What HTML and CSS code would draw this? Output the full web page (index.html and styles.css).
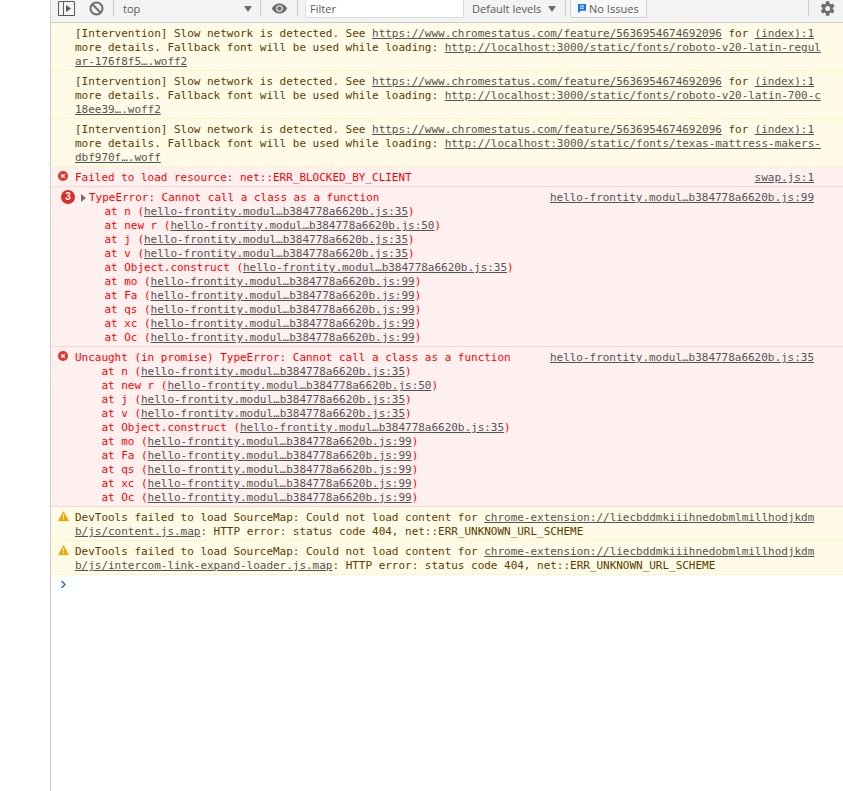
FILE: index.html
```html
<!DOCTYPE html>
<html lang="en">
<head>
<meta charset="utf-8">
<title>Console</title>
<link rel="stylesheet" href="styles.css">
</head>
<body>
<div class="panel">
  <div class="toolbar">
    <svg class="ic-sidebar" width="17" height="15" viewBox="0 0 17 15"><path d="M0.5 0.5h16v14h-16z M5.500 0.5v14" fill="none" stroke="#5a5a5a"/><path d="M8 4l5 3.500-5 3.500z" fill="#5a5a5a"/></svg>
    <svg class="ic-block" width="15" height="15" viewBox="0 0 15 15"><circle cx="7.500" cy="7.500" r="6" fill="none" stroke="#6e6e6e" stroke-width="2"/><path d="M3.300 3.300l8.400 8.400" stroke="#6e6e6e" stroke-width="2"/></svg>
    <span class="sep sep-a"></span>
    <div class="context"><span>top</span><i class="tri"></i></div>
    <span class="sep sep-b"></span>
    <svg class="ic-eye" width="17" height="11" viewBox="0 0 16 11"><path d="M8 0.500C4.500 0.500 1.600 2.600 0.300 5.500 1.600 8.400 4.500 10.500 8 10.500s6.400-2.100 7.700-5C14.400 2.600 11.500 0.500 8 0.500z" fill="#6e6e6e"/><circle cx="8" cy="5.500" r="3.300" fill="#f3f3f3"/><circle cx="8" cy="5.500" r="2.200" fill="#6e6e6e"/></svg>
    <span class="sep sep-c"></span>
    <div class="filter">Filter</div>
    <div class="levels"><span>Default levels</span><i class="tri"></i></div>
    <span class="sep sep-d"></span>
    <div class="issues"><svg width="8" height="9" viewBox="0 0 8 9"><path d="M0 0h8v6.800H3L0 9z" fill="#1a73e8"/><path d="M2 2h4M2 4.200h4" stroke="#fff"/></svg><span>No Issues</span></div>
    <span class="sep sep-e"></span>
    <svg class="ic-gear" width="15" height="15" viewBox="1.500 1.500 21 21"><path fill="#6e6e6e" d="M19.400 13a7.500 7.500 0 0 0 0-2l2.400-1.900-2.300-4-2.900 1.200a7.500 7.500 0 0 0-1.700-1L14.500 2h-4.600l-.4 3.300a7.500 7.500 0 0 0-1.700 1L4.900 5.100l-2.300 4L5 11a7.500 7.500 0 0 0 0 2l-2.400 1.900 2.300 4 2.900-1.200a7.500 7.500 0 0 0 1.700 1l.4 3.300h4.600l.4-3.300a7.500 7.500 0 0 0 1.700-1l2.900 1.200 2.300-4zM12.200 15.500a3.500 3.500 0 1 1 0-7 3.500 3.500 0 0 1 0 7z"/></svg>
  </div>

  <div class="msg info">
    <div class="line split"><span>[Intervention] Slow network is detected. See <a>https://www.chromestatus.com/feature/5636954674692096</a> for</span><a>(index):1</a></div>
    <div class="line">more details. Fallback font will be used while loading: <a>http://localhost:3000/static/fonts/roboto-v20-latin-regul</a></div>
    <div class="line"><a>ar-176f8f5….woff2</a></div>
  </div>
  <div class="msg info">
    <div class="line split"><span>[Intervention] Slow network is detected. See <a>https://www.chromestatus.com/feature/5636954674692096</a> for</span><a>(index):1</a></div>
    <div class="line">more details. Fallback font will be used while loading: <a>http://localhost:3000/static/fonts/roboto-v20-latin-700-c</a></div>
    <div class="line"><a>18ee39….woff2</a></div>
  </div>
  <div class="msg info">
    <div class="line split"><span>[Intervention] Slow network is detected. See <a>https://www.chromestatus.com/feature/5636954674692096</a> for</span><a>(index):1</a></div>
    <div class="line">more details. Fallback font will be used while loading: <a>http://localhost:3000/static/fonts/texas-mattress-makers-</a></div>
    <div class="line"><a>dbf970f….woff</a></div>
  </div>

  <div class="msg error">
    <svg class="ic-err" width="10" height="10" viewBox="0 0 11 11"><circle cx="5.500" cy="5.500" r="5.500" fill="#e2352d"/><path d="M3.500 3.500l4 4M7.500 3.500l-4 4" stroke="#fff" stroke-width="1.400"/></svg>
    <div class="line split"><span>Failed to load resource: net::ERR_BLOCKED_BY_CLIENT</span><a>swap.js:1</a></div>
  </div>

  <div class="msg error group">
    <span class="count">3</span>
    <i class="disclosure"></i>
    <div class="line split"><span>TypeError: Cannot call a class as a function</span><a>hello-frontity.modul…b384778a6620b.js:99</a></div>
    <div class="frame">    at n (<a>hello-frontity.modul…b384778a6620b.js:35</a>)</div>
    <div class="frame">    at new r (<a>hello-frontity.modul…b384778a6620b.js:50</a>)</div>
    <div class="frame">    at j (<a>hello-frontity.modul…b384778a6620b.js:35</a>)</div>
    <div class="frame">    at v (<a>hello-frontity.modul…b384778a6620b.js:35</a>)</div>
    <div class="frame">    at Object.construct (<a>hello-frontity.modul…b384778a6620b.js:35</a>)</div>
    <div class="frame">    at mo (<a>hello-frontity.modul…b384778a6620b.js:99</a>)</div>
    <div class="frame">    at Fa (<a>hello-frontity.modul…b384778a6620b.js:99</a>)</div>
    <div class="frame">    at qs (<a>hello-frontity.modul…b384778a6620b.js:99</a>)</div>
    <div class="frame">    at xc (<a>hello-frontity.modul…b384778a6620b.js:99</a>)</div>
    <div class="frame">    at Oc (<a>hello-frontity.modul…b384778a6620b.js:99</a>)</div>
  </div>

  <div class="msg error">
    <svg class="ic-err" width="10" height="10" viewBox="0 0 11 11"><circle cx="5.500" cy="5.500" r="5.500" fill="#e2352d"/><path d="M3.500 3.500l4 4M7.500 3.500l-4 4" stroke="#fff" stroke-width="1.400"/></svg>
    <div class="line split"><span>Uncaught (in promise) TypeError: Cannot call a class as a function</span><a>hello-frontity.modul…b384778a6620b.js:35</a></div>
    <div class="line">    at n (<a>hello-frontity.modul…b384778a6620b.js:35</a>)</div>
    <div class="line">    at new r (<a>hello-frontity.modul…b384778a6620b.js:50</a>)</div>
    <div class="line">    at j (<a>hello-frontity.modul…b384778a6620b.js:35</a>)</div>
    <div class="line">    at v (<a>hello-frontity.modul…b384778a6620b.js:35</a>)</div>
    <div class="line">    at Object.construct (<a>hello-frontity.modul…b384778a6620b.js:35</a>)</div>
    <div class="line">    at mo (<a>hello-frontity.modul…b384778a6620b.js:99</a>)</div>
    <div class="line">    at Fa (<a>hello-frontity.modul…b384778a6620b.js:99</a>)</div>
    <div class="line">    at qs (<a>hello-frontity.modul…b384778a6620b.js:99</a>)</div>
    <div class="line">    at xc (<a>hello-frontity.modul…b384778a6620b.js:99</a>)</div>
    <div class="line">    at Oc (<a>hello-frontity.modul…b384778a6620b.js:99</a>)</div>
  </div>

  <div class="msg warn">
    <svg class="ic-warn" width="11" height="10" viewBox="0 0 11 10"><path d="M5.500 0L11 10H0z" fill="#f2a600"/><path d="M5.500 3.200v3.300M5.500 7.500v1.200" stroke="#fff" stroke-width="1.100"/></svg>
    <div class="line">DevTools failed to load SourceMap: Could not load content for <a>chrome-extension://liecbddmkiiihnedobmlmillhodjkdm</a></div>
    <div class="line"><a>b/js/content.js.map</a>: HTTP error: status code 404, net::ERR_UNKNOWN_URL_SCHEME</div>
  </div>
  <div class="msg warn">
    <svg class="ic-warn" width="11" height="10" viewBox="0 0 11 10"><path d="M5.500 0L11 10H0z" fill="#f2a600"/><path d="M5.500 3.200v3.300M5.500 7.500v1.200" stroke="#fff" stroke-width="1.100"/></svg>
    <div class="line">DevTools failed to load SourceMap: Could not load content for <a>chrome-extension://liecbddmkiiihnedobmlmillhodjkdm</a></div>
    <div class="line"><a>b/js/intercom-link-expand-loader.js.map</a>: HTTP error: status code 404, net::ERR_UNKNOWN_URL_SCHEME</div>
  </div>

  <div class="prompt"><svg width="7" height="9" viewBox="0 0 7 9"><path d="M1.500 1l3.500 3.500L1.500 8" fill="none" stroke="#2a73e8" stroke-width="1.600"/></svg></div>
</div>
</body>
</html>
```
FILE: styles.css
```css
html, body {
  margin: 0;
  height: 100%;
  background: #fff;
}
.panel {
  margin-left: 50px;
  height: 791px;
  box-sizing: border-box;
  border-left: 1px solid #ccc;
  font-family: "DejaVu Sans Mono", monospace;
  font-size: 11px;
  letter-spacing: -0.022px;
  line-height: 14px;
  overflow: hidden;
}
.toolbar {
  height: 23px;
  box-sizing: border-box;
  border-bottom: 1px solid #ccc;
  background: #f3f3f3;
  display: flex;
  align-items: flex-start;
  font-family: "Open Sans", sans-serif;
  font-size: 11px;
  letter-spacing: 0.02px;
  line-height: 17px;
  color: #5a5a5a;
}
.ic-sidebar { margin: 1px 0 0 7px; flex: none; }
.ic-block { margin: 1px 0 0 14px; flex: none; }
.sep { width: 1px; height: 16px; background: #ccc; flex: none; }
.sep-a { margin-left: 9px; }
.context { margin-left: 9px; width: 129px; display: flex; justify-content: space-between; align-items: center; flex: none; height: 17px; }
.tri { width: 0; height: 0; border-left: 4px solid transparent; border-right: 4px solid transparent; border-top: 6px solid #6e6e6e; display: block; }
.sep-b { margin-left: 8px; }
.ic-eye { margin: 3px 0 0 10px; flex: none; }
.sep-c { margin-left: 9px; }
.filter {
  margin-left: 7px;
  width: 159px;
  height: 18px;
  box-sizing: border-box;
  background: #fff;
  border: 1px solid #ddd;
  border-top: 0;
  padding-left: 4px;
  flex: none;
}
.levels { margin-left: 8px; width: 84px; display: flex; justify-content: space-between; align-items: center; flex: none; height: 17px; }
.sep-d { margin-left: 9px; }
.issues {
  margin-left: 4px;
  width: 77px;
  height: 18px;
  box-sizing: border-box;
  border: 1px solid #d0d0d0;
  border-top: 0;
  border-radius: 0 0 2px 2px;
  background: #f8f8f8;
  display: flex;
  align-items: center;
  gap: 3px;
  padding-left: 7px;
  flex: none;
}
.sep-e { margin-left: 161px; }
.ic-gear { margin: 1px 0 0 11px; flex: none; }

.msg {
  position: relative;
  padding: 4px 29px 1px 24px;
  border-bottom: 1px solid #fff;
}
.line, .frame { white-space: pre; }
.split { display: flex; justify-content: space-between; }
a { text-decoration: underline; color: #545454; }

.info { background: #fffbe6; color: #5c3b00; border-bottom-color: #fff5c2; }
.error { background: #fff0f0; color: #f00; border-bottom-color: #ffd6d6; }
.warn { background: #fffbe6; color: #5c3b00; border-bottom-color: #fff5c2; }

.group > .line { padding-left: 14px; }
.frame { padding-left: 3px; }

.ic-err { position: absolute; left: 7px; top: 4px; }
.ic-warn { position: absolute; left: 7px; top: 4px; }
.count {
  position: absolute;
  left: 10px;
  top: 3px;
  width: 14px;
  height: 14px;
  border-radius: 50%;
  background: #d93025;
  color: #fff;
  font: bold 10px/14px "Liberation Sans", sans-serif;
  text-align: center;
}
.disclosure {
  position: absolute;
  left: 30px;
  top: 7px;
  width: 0;
  height: 0;
  border-top: 4px solid transparent;
  border-bottom: 4px solid transparent;
  border-left: 5px solid #727272;
}
.prompt { padding: 5px 0 0 9px; line-height: 12px; }
.prompt svg { display: block; }
```
